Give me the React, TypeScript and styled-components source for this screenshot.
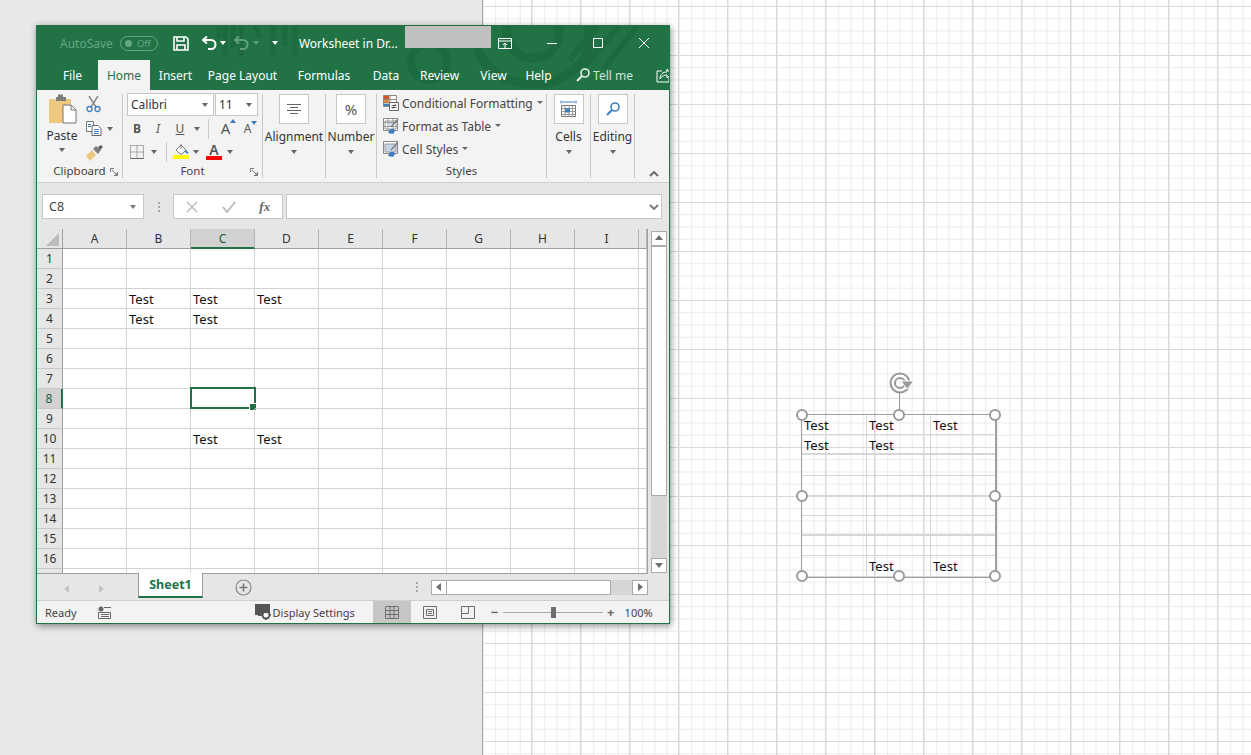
import * as React from "react"
import styled, { createGlobalStyle } from "styled-components"

const GREEN = "#217346"
const UI_FONT = `"Noto Sans", "Open Sans", Arial, sans-serif`

const GlobalStyle = createGlobalStyle`
    html, body {
        margin: 0;
        padding: 0;
        width: 1251px;
        height: 755px;
        overflow: hidden;
        font-family: ${UI_FONT};
        font-size: 12px;
        color: #333;
    }
    * { box-sizing: border-box; }
`

const Page = styled.div`
    position: relative;
    display: flex;
    width: 1251px;
    height: 755px;
`

const LeftPane = styled.div`
    width: 483px;
    background: #e8e8e8;
    border-right: 1px solid #a6a6b0;
`

const Canvas = styled.div`
    flex: 1;
    background-color: #fff;
    background-image:
        linear-gradient(to right, #d9d9d9 1px, transparent 1px),
        linear-gradient(to bottom, #d9d9d9 1px, transparent 1px),
        linear-gradient(to right, #ebebeb 1px, transparent 1px),
        linear-gradient(to bottom, #ebebeb 1px, transparent 1px);
    background-size: 49px 49px, 49px 49px, 12.25px 12.25px, 12.25px 12.25px;
    background-position: 48px 6px, 48px 6px, 0 6px, 0 6px;
`

const ExcelWindow = styled.div`
    position: absolute;
    left: 36px;
    top: 25px;
    width: 634px;
    height: 599px;
    display: flex;
    flex-direction: column;
    background: #e6e6e6;
    border: 1px solid ${GREEN};
    box-shadow: 1px 2px 7px rgba(0, 0, 0, 0.45);
`

const Header = styled.header`
    position: relative;
    height: 64px;
    flex: none;
    background: ${GREEN};
    color: #fff;
    overflow: hidden;
`

const HeaderPattern = styled.svg`
    position: absolute;
    left: 0;
    top: 0;
`

const TitleBar = styled.div`
    position: relative;
    display: flex;
    align-items: center;
    height: 34px;
    padding-left: 23px;
`

const Dim = styled.span`
    color: #66a584;
`

const Toggle = styled.div`
    display: flex;
    align-items: center;
    gap: 5px;
    width: 38px;
    height: 15px;
    margin-left: 7px;
    padding-left: 4px;
    border: 1px solid #66a584;
    border-radius: 8px;
    font-size: 9.5px;
    color: #66a584;
    &::before {
        content: "";
        width: 7px;
        height: 7px;
        border-radius: 50%;
        background: #66a584;
    }
`

const Slot = styled.div<{ $w: number; $ml?: number }>`
    display: flex;
    align-items: center;
    justify-content: center;
    flex: none;
    width: ${p => p.$w}px;
    margin-left: ${p => p.$ml || 0}px;
`

const DocTitle = styled.div`
    width: 106px;
    margin-left: 20px;
    white-space: nowrap;
`

const Redacted = styled.div`
    width: 86px;
    height: 22px;
    margin-top: -13px;
    background: #c0c0c0;
`

const TabBar = styled.nav`
    position: relative;
    display: flex;
    align-items: flex-end;
    height: 30px;
    padding-left: 10px;
`

const Tab = styled.div<{ $active?: boolean; $w: number }>`
    display: flex;
    align-items: center;
    justify-content: center;
    flex: none;
    width: ${p => p.$w}px;
    height: 30px;
    background: ${p => (p.$active ? "#f3f3f3" : "transparent")};
    color: ${p => (p.$active ? GREEN : "#fff")};
    white-space: nowrap;
`

const Ribbon = styled.section`
    display: flex;
    flex: none;
    height: 93px;
    padding-top: 4px;
    background: #f3f3f3;
    border-bottom: 1px solid #d0d0d0;
`

const Group = styled.div<{ $w: number }>`
    display: flex;
    flex-direction: column;
    flex: none;
    width: ${p => p.$w}px;
    height: 84px;
    border-right: 1px solid #c9c9c9;
`

const GroupBody = styled.div`
    flex: 1;
    display: flex;
    min-height: 0;
`

const GroupLabel = styled.div`
    position: relative;
    height: 15px;
    line-height: 15px;
    font-size: 11.5px;
    text-align: center;
    color: #444;
    svg {
        position: absolute;
        right: 4px;
        top: 5px;
    }
`

const Arrow = styled.span<{ $c?: string }>`
    display: inline-block;
    flex: none;
    width: 0;
    height: 0;
    border-left: 3.5px solid transparent;
    border-right: 3.5px solid transparent;
    border-top: 4px solid ${p => p.$c || "#666"};
`

const PasteColumn = styled.div`
    display: flex;
    flex-direction: column;
    align-items: center;
    width: 42px;
    margin-left: 4px;
    color: #333;
`

const StackLabel = styled.div`
    margin-top: 3px;
    line-height: 16px;
    white-space: nowrap;
    font-size: 12px;
`

const ClipTools = styled.div`
    display: flex;
    flex-direction: column;
    gap: 7px;
    margin-left: 3px;
    padding-top: 2px;
`

const ClipTool = styled.div`
    display: flex;
    align-items: center;
    gap: 5px;
    height: 17px;
`

const FontBody = styled.div`
    display: flex;
    flex-direction: column;
    padding-left: 4px;
    margin-top: -1px;
`

const FontSelects = styled.div`
    display: flex;
    gap: 1px;
    margin-bottom: 1px;
`

const Select = styled.div<{ $w: number }>`
    display: flex;
    align-items: center;
    justify-content: space-between;
    width: ${p => p.$w}px;
    height: 23px;
    padding: 0 5px 0 3px;
    background: #fff;
    border: 1px solid #c6c6c6;
`

const FontRow = styled.div`
    display: flex;
    align-items: center;
    height: 24px;
`

const FontButton = styled.div<{ $w: number; $bold?: boolean; $italic?: boolean; $under?: boolean }>`
    display: flex;
    align-items: center;
    justify-content: center;
    flex: none;
    width: ${p => p.$w}px;
    font-size: 12px;
    color: #555;
    font-weight: ${p => (p.$bold ? 700 : 400)};
    font-style: ${p => (p.$italic ? "italic" : "normal")};
    text-decoration: ${p => (p.$under ? "underline" : "none")};
`

const GrowA = styled.span<{ $size: number }>`
    position: relative;
    font-size: ${p => p.$size}px;
    line-height: 1;
    color: #555;
    svg {
        position: absolute;
        left: 100%;
        top: -2px;
    }
`

const RowSep = styled.div`
    flex: none;
    width: 1px;
    height: 20px;
    margin: 0 5px;
    background: #c9c9c9;
`

const ColorA = styled.div`
    display: flex;
    flex-direction: column;
    align-items: center;
    width: 16px;
    font-weight: 600;
    font-size: 14px;
    line-height: 13px;
    color: #555;
`

const ColorBar = styled.div<{ $c: string }>`
    width: 16px;
    height: 4px;
    background: ${p => p.$c};
`

const StackGroup = styled.div`
    flex: 1;
    display: flex;
    flex-direction: column;
    align-items: center;
`

const BoxButton = styled.div`
    display: flex;
    align-items: center;
    justify-content: center;
    width: 30px;
    height: 30px;
    background: #fff;
    border: 1px solid #c6c6c6;
    font-size: 15px;
    color: #555;
`

const StylesList = styled.div`
    display: flex;
    flex-direction: column;
    gap: 5px;
    padding-left: 6px;
`

const StyleItem = styled.div`
    display: flex;
    align-items: center;
    gap: 3px;
    height: 18px;
    white-space: nowrap;
    color: #444;
    ${Arrow} {
        margin-left: 1px;
        margin-top: -2px;
        border-left-width: 3px;
        border-right-width: 3px;
        border-top-width: 3px;
    }
`

const Collapse = styled.div`
    margin-left: auto;
    margin-right: 10px;
    align-self: flex-end;
    padding-bottom: 5px;
`

const FormulaBar = styled.div`
    display: flex;
    align-items: center;
    flex: none;
    height: 46px;
    padding-left: 5px;
    padding-top: 1px;
`

const NameBox = styled.div`
    display: flex;
    align-items: center;
    justify-content: space-between;
    width: 102px;
    height: 25px;
    padding: 0 7px 0 6px;
    background: #fff;
    border: 1px solid #c6c6c6;
    font-size: 12.5px;
    color: #444;
`

const Grip = styled.div`
    display: flex;
    flex-direction: column;
    gap: 2px;
    margin: 0 13px 0 14px;
    i {
        display: block;
        width: 2px;
        height: 2px;
        background: #a8a8a8;
    }
`

const FuncBox = styled.div`
    display: flex;
    align-items: center;
    justify-content: space-around;
    width: 110px;
    height: 25px;
    margin-right: 3px;
    background: #fff;
    border: 1px solid #c6c6c6;
`

const Fx = styled.span`
    font-family: "Liberation Serif", serif;
    font-style: italic;
    font-weight: 700;
    font-size: 13px;
    color: #666;
`

const FormulaInput = styled.div`
    display: flex;
    align-items: center;
    justify-content: flex-end;
    width: 376px;
    height: 25px;
    padding-right: 2px;
    background: #fff;
    border: 1px solid #c6c6c6;
`

const SheetArea = styled.div`
    display: flex;
    flex: none;
    height: 345px;
`

const Sheet = styled.div`
    display: grid;
    grid-template-columns: 26px repeat(9, 64px) 8px;
    grid-auto-rows: 20px;
    width: 611px;
    height: 345px;
    overflow: hidden;
    background: #fff;
    border-right: 1px solid #9e9e9e;
    border-bottom: 1px solid #9e9e9e;
    font-size: 13px;
`

const Corner = styled.div`
    position: relative;
    background: #e6e6e6;
    border-right: 1px solid #9e9e9e;
    border-bottom: 1px solid #9e9e9e;
    &::after {
        content: "";
        position: absolute;
        right: 3px;
        bottom: 2px;
        border-left: 13px solid transparent;
        border-bottom: 13px solid #bdbdbd;
    }
`

const ColHead = styled.div<{ $on?: boolean }>`
    display: flex;
    align-items: center;
    justify-content: center;
    background: ${p => (p.$on ? "#d2d2d2" : "#e6e6e6")};
    color: ${p => (p.$on ? "#1c5f3b" : "#333")};
    font-size: 12px;
    border-right: 1px solid #b4b4b4;
    border-bottom: ${p => (p.$on ? `2px solid ${GREEN}` : "1px solid #9e9e9e")};
`

const RowHead = styled.div<{ $on?: boolean }>`
    display: flex;
    align-items: center;
    justify-content: center;
    background: ${p => (p.$on ? "#d2d2d2" : "#e6e6e6")};
    color: ${p => (p.$on ? "#1c5f3b" : "#333")};
    font-size: 12px;
    border-right: ${p => (p.$on ? `2px solid ${GREEN}` : "1px solid #9e9e9e")};
    border-bottom: 1px solid #c8c8c8;
`

const Cell = styled.div<{ $selected?: boolean }>`
    position: relative;
    padding-left: 2px;
    line-height: 20px;
    color: #111;
    white-space: nowrap;
    border-right: 1px solid #d4d4d4;
    border-bottom: 1px solid #d4d4d4;
    ${p => p.$selected && `
        &::before {
            content: "";
            position: absolute;
            inset: -2px -2px -1px -1px;
            border: 2px solid ${GREEN};
        }
        &::after {
            content: "";
            position: absolute;
            right: -3px;
            bottom: -3px;
            width: 6px;
            height: 6px;
            background: ${GREEN};
            border: 1px solid #fff;
        }
    `}
`

const VScroll = styled.div`
    display: flex;
    flex-direction: column;
    width: 16px;
    margin: 2px 0 1px 3px;
`

const ScrollButton = styled.div<{ $w?: number }>`
    display: flex;
    align-items: center;
    justify-content: center;
    flex: none;
    width: ${p => p.$w || 16}px;
    height: 15px;
    background: #fff;
    border: 1px solid #ababab;
`

const VThumb = styled.div`
    flex: none;
    height: 250px;
    background: #fff;
    border: 1px solid #ababab;
`

const Track = styled.div`
    flex: 1;
    background: #d6d6d6;
`

const SheetTabs = styled.div`
    display: flex;
    align-items: center;
    flex: none;
    height: 27px;
    padding-left: 101px;
    border-bottom: 1px solid #d0d0d0;
    position: relative;
`

const TabArrows = styled.div`
    position: absolute;
    left: 25px;
    top: 10px;
    display: flex;
    gap: 24px;
`

const SheetTab = styled.div`
    display: flex;
    align-items: center;
    justify-content: center;
    width: 65px;
    height: 25px;
    margin-top: -3px;
    background: #fff;
    border: 1px solid #9e9e9e;
    border-top: none;
    border-bottom: 2px solid ${GREEN};
    font-weight: 700;
    font-size: 12.5px;
    color: ${GREEN};
`

const AddSheet = styled.div`
    margin-left: 32px;
    height: 17px;
`

const HScroll = styled.div`
    display: flex;
    align-items: center;
    height: 15px;
    width: 217px;
    margin-left: 13px;
`

const HThumb = styled.div`
    flex: none;
    width: 165px;
    height: 15px;
    margin-left: -1px;
    background: #fff;
    border: 1px solid #ababab;
`

const StatusBar = styled.footer`
    flex: 1;
    display: flex;
    align-items: center;
    padding-left: 8px;
    background: #f3f3f3;
    font-size: 11px;
    color: #444;
`

const ViewButton = styled.div<{ $on?: boolean }>`
    display: flex;
    align-items: center;
    justify-content: center;
    flex: none;
    align-self: stretch;
    width: 38px;
    background: ${p => (p.$on ? "#c6c6c6" : "transparent")};
`

const ZoomSlider = styled.div`
    position: relative;
    width: 100px;
    height: 1px;
    margin: 0 3px;
    background: #a6a6a6;
    &::after {
        content: "";
        position: absolute;
        left: 48px;
        top: -5px;
        width: 5px;
        height: 11px;
        background: #6e6e6e;
    }
`

const ZoomGlyph = styled.span`
    flex: none;
    width: 10px;
    font-size: 13px;
    font-weight: 700;
    line-height: 1;
    color: #666;
    text-align: center;
`

const DrawnObject = styled.div`
    position: absolute;
    left: 801px;
    top: 414px;
    width: 196px;
    height: 164px;
    border: 1px solid #9e9e9e;
    border-width: 1px 2px 2px 1px;
`

const ObjectTable = styled.div`
    display: grid;
    grid-template-columns: 65px 64px 1fr;
    grid-template-rows: repeat(8, 20.2px);
    height: 100%;
    font-size: 13px;
    color: #111;
`

const ObjectCell = styled.div<{ $thick?: boolean; $last?: boolean }>`
    padding-left: 2px;
    line-height: 20px;
    border-right: ${p => (p.$last ? "none" : "1px solid #d6d6d6")};
    border-bottom: ${p => (p.$thick ? "2px" : "1px")} solid #d6d6d6;
`

const Handle = styled.div<{ $x: number; $y: number }>`
    position: absolute;
    left: ${p => p.$x}%;
    top: ${p => p.$y}%;
    width: 12px;
    height: 12px;
    margin: -6px 0 0 -6px;
    background: #fff;
    border: 2px solid #9a9a9a;
    border-radius: 50%;
`

const RotateStem = styled.div`
    position: absolute;
    left: 97px;
    top: -22px;
    width: 1px;
    height: 17px;
    background: #9a9a9a;
`

const RotateIcon = styled.svg`
    position: absolute;
    left: 87px;
    top: -44px;
`

const Svg: React.FC<{ w: number; h: number; children: React.ReactNode }> = ({ w, h, children }) => (
    <svg width={w} height={h} viewBox={`0 0 ${w} ${h}`} fill="none" style={{ display: "block", flex: "none" }}>
        {children}
    </svg>
)

const SaveIcon = () => (
    <Svg w={16} h={15}>
        <path d="M1 1h12l2 2v11H1z" stroke="#fff" strokeWidth="1.6" />
        <path d="M4 1v4h7V1M4 14V9h8v5" stroke="#fff" strokeWidth="1.6" />
    </Svg>
)

const UndoIcon = ({ c = "#fff" }: { c?: string }) => (
    <Svg w={15} h={14}>
        <path d="M1 4h8a4 4 0 0 1 0 9H6" stroke={c} strokeWidth="2" />
        <path d="M5 0.5 1 4l4 3.5" stroke={c} strokeWidth="2" />
    </Svg>
)

const PasteIcon = () => (
    <Svg w={29} h={31}>
        <path d="M1 5h22v24H2a1 1 0 0 1-1-1z" fill="#edc87e" />
        <path d="M8 3h2V0.5h5V3h3v4H8z" fill="#7d7d7d" />
        <path d="M15 11h8l5 5v13H15z" fill="#fff" stroke="#777" />
        <path d="M23 11v5h5" stroke="#777" />
    </Svg>
)

const ScissorsIcon = () => (
    <Svg w={15} h={17}>
        <path d="M3 0l7 11M12 0L5 11" stroke="#8a8a8a" strokeWidth="1.5" />
        <circle cx="3.5" cy="13" r="2.5" stroke="#3f7fc1" strokeWidth="1.3" />
        <circle cx="11.5" cy="13" r="2.5" stroke="#3f7fc1" strokeWidth="1.3" />
    </Svg>
)

const CopyIcon = () => (
    <Svg w={16} h={15}>
        <path d="M.5.5h7v10h-7z" fill="#fff" stroke="#777" />
        <path d="M6 4.5h6l3 3v7H6z" fill="#fff" stroke="#666" />
        <path d="M8 8.5h5M8 10.5h5M8 12.5h5M2 3.5h3M2 5.5h3" stroke="#3f7fc1" />
    </Svg>
)

const BrushIcon = () => (
    <Svg w={17} h={16}>
        <path d="M0 11l6-6 4 5-6 6z" fill="#edc87e" />
        <path d="M7 4l3-3 5 4-3 4z" fill="#7d7d7d" />
        <path d="M12 2l3-2 2 2-3 3z" fill="#5e5e5e" />
    </Svg>
)

const UpTick = ({ c = "#3f7fc1", flip = false }: { c?: string; flip?: boolean }) => (
    <svg width="6" height="4" viewBox="0 0 6 4">
        <path d={flip ? "M0 0h6L3 4z" : "M3 0l3 4H0z"} fill={c} />
    </svg>
)

const BorderIcon = () => (
    <Svg w={14} h={14}>
        <path d="M.5.5h13v13H.5zM7 .5v13M.5 7h13" stroke="#666" strokeDasharray="1 1" />
        <path d="M.5 13.5h13" stroke="#666" />
    </Svg>
)

const FillIcon = () => (
    <Svg w={16} h={11}>
        <path d="M3 6l5-5 5 5-4 4H7z" fill="#fff" stroke="#777" />
        <path d="M8 0v5" stroke="#777" />
        <path d="M13 6l2.5 2.5-1 1.5-2.5-2z" fill="#3f7fc1" />
    </Svg>
)

const AlignIcon = () => (
    <Svg w={14} h={11}>
        <path d="M0 .5h14M3 3.5h8M0 6.5h14M3 9.5h8" stroke="#666" />
    </Svg>
)

const CondIcon = () => (
    <Svg w={16} h={16}>
        <path d="M.5.5h13v11H.5z" fill="#fff" stroke="#888" />
        <path d="M1 1h5v3H1z" fill="#d2552c" />
        <path d="M1 5h5v3H1z" fill="#e08a3c" />
        <path d="M1 9h5v2H1z" fill="#3f7fc1" />
        <path d="M7 .5v11M.5 4.5h13M.5 8h13" stroke="#888" />
        <path d="M6.5 7.5h9v8h-9z" fill="#fff" stroke="#666" />
        <path d="M8.5 10.5h5M8.5 12.5h5M12.5 9l-3 5" stroke="#444" strokeWidth=".8" />
    </Svg>
)

const TableIcon = ({ plain = false }: { plain?: boolean }) => (
    <Svg w={16} h={16}>
        <path d="M.5.5h14v12H.5z" fill="#fff" stroke="#888" />
        {!plain && <path d="M.5 4.5h14M.5 8.5h14M5 .5v12M10 .5v12" stroke="#999" />}
        <path d="M2 3h11v8H2z" fill={plain ? "#c7d6e8" : "none"} stroke="#999" />
        {!plain && <path d="M5 5h5v3H5z" fill="#c7d6e8" />}
        <path d="M15 1L8 9" stroke="#777" strokeWidth="1.2" />
        <path d="M7 11l4 0 1 2-2 3-5-1z" fill="#3f7fc1" />
    </Svg>
)

const CellsIcon = () => (
    <Svg w={17} h={18}>
        <path d="M1 .5v3M16 .5v3M2 2h13" stroke="#3f7fc1" />
        <path d="M1.5 5.5h14v11h-14z" fill="#fff" stroke="#777" />
        <path d="M1.5 8.5h14M1.5 11.5h14M1.5 14.5h14M5 5.5v11M9 5.5v11M12.5 5.5v11" stroke="#999" />
        <path d="M5 8.5h5v4H5z" fill="#3f7fc1" />
    </Svg>
)

const SearchIcon = ({ c = "#3f7fc1", s = 14 }: { c?: string; s?: number }) => (
    <svg width={s} height={s} viewBox="0 0 14 14" fill="none" style={{ display: "block" }}>
        <circle cx="9" cy="5" r="4" stroke={c} strokeWidth="1.6" />
        <path d="M6 8l-5 5" stroke={c} strokeWidth="2" />
    </svg>
)

const GroupCorner = () => (
    <svg width="8" height="8" viewBox="0 0 8 8" fill="none">
        <path d="M.5 4V.5H4M7.5 4v3.5H4M2 2l5 5M5 7h2V5" stroke="#777" />
    </svg>
)

const Chevron = ({ up = false, c = "#666" }: { up?: boolean; c?: string }) => (
    <svg width="10" height="6" viewBox="0 0 10 6" fill="none" style={{ display: "block" }}>
        <path d={up ? "M1 5l4-4 4 4" : "M1 1l4 4 4-4"} stroke={c} strokeWidth="1.8" />
    </svg>
)

const Tri = ({ dir, c = "#6e6e6e" }: { dir: "up" | "down" | "left" | "right"; c?: string }) => {
    const d = { up: "M5 1l4 5H1z", down: "M1 2h8L5 7z", left: "M7 1v8L2 5z", right: "M3 1v8l5-4z" }[dir]
    return (
        <svg width="10" height="10" viewBox="0 0 10 10" style={{ display: "block" }}>
            <path d={d} fill={c} />
        </svg>
    )
}

const COLS = ["A", "B", "C", "D", "E", "F", "G", "H", "I"]
const ROWS = Array.from({ length: 17 }, (_, i) => i + 1)

const SHEET: Record<number, string[]> = {
    3: ["B", "C", "D"],
    4: ["B", "C"],
    10: ["C", "D"],
}

const OBJECT_ROWS = [
    ["Test", "Test", "Test"],
    ["Test", "Test", ""],
    ["", "", ""],
    ["", "", ""],
    ["", "", ""],
    ["", "", ""],
    ["", "", ""],
    ["", "Test", "Test"],
]

const HANDLES = [
    [0, 0], [50, 0], [100, 0],
    [0, 50], [100, 50],
    [0, 100], [50, 100], [100, 100],
]

const TABS: [string, number][] = [
    ["File", 51],
    ["Home", 52],
    ["Insert", 51],
    ["Page Layout", 83],
    ["Formulas", 80],
    ["Data", 44],
    ["Review", 63],
    ["View", 45],
    ["Help", 45],
]

export default function App() {
    return (
        <>
            <GlobalStyle />
            <Page>
                <LeftPane />
                <Canvas />

                <ExcelWindow>
                    <Header>
                        <HeaderPattern width="632" height="64" viewBox="0 0 632 64" fill="none">
                            <g stroke="#1d6a3f" strokeWidth="5">
                                <path d="M182 0v12M188 0v30M196 0v22M204 0v30M218 0l6 12M236 0v30M248 0v20M258 0v30" />
                                <circle cx="392" cy="36" r="18" strokeWidth="8" />
                                <path d="M440 0v14a56 44 0 0 0 112 0V0" strokeWidth="9" />
                                <path d="M470 0v8a26 24 0 0 0 52 0V0" strokeWidth="9" />
                                <path d="M560 0l-28 34M582 0l-34 40M600 0l-34 44" strokeWidth="6" />
                            </g>
                        </HeaderPattern>
                        <TitleBar>
                            <Dim>AutoSave</Dim>
                            <Toggle>Off</Toggle>
                            <Slot $w={16} $ml={15}><SaveIcon /></Slot>
                            <Slot $w={15} $ml={13}><UndoIcon /></Slot>
                            <Slot $w={7} $ml={3}><Arrow $c="#fff" /></Slot>
                            <Slot $w={15} $ml={7}><UndoIcon c="#5f9f7f" /></Slot>
                            <Slot $w={7} $ml={4}><Arrow $c="#5f9f7f" /></Slot>
                            <Slot $w={7} $ml={12}><Arrow $c="#fff" /></Slot>
                            <DocTitle>Worksheet in Dr...</DocTitle>
                            <Redacted />
                            <Slot $w={14} $ml={7}>
                                <Svg w={14} h={11}>
                                    <path d="M.5.5h13v10H.5zM.5 3h13M7 10V5M5 7l2-2 2 2" stroke="#fff" />
                                </Svg>
                            </Slot>
                            <Slot $w={10} $ml={35}>
                                <Svg w={10} h={10}><path d="M0 5.5h10" stroke="#fff" /></Svg>
                            </Slot>
                            <Slot $w={10} $ml={36}>
                                <Svg w={10} h={10}><path d="M.5.5h9v9h-9z" stroke="#fff" /></Svg>
                            </Slot>
                            <Slot $w={10} $ml={36}>
                                <Svg w={10} h={10}><path d="M0 0l10 10M10 0L0 10" stroke="#fff" /></Svg>
                            </Slot>
                        </TitleBar>
                        <TabBar>
                            {TABS.map(([name, w]) => (
                                <Tab key={name} $w={w} $active={name === "Home"}>{name}</Tab>
                            ))}
                            <Slot $w={14} $ml={15} style={{ height: 30 }}><SearchIcon c="#e6f0ea" /></Slot>
                            <Tab $w={46} style={{ color: "#cfe3d8" }}>Tell me</Tab>
                            <Slot $w={16} $ml={20} style={{ height: 30 }}>
                                <Svg w={16} h={15}>
                                    <path d="M6 3H1v11h12V9" stroke="#fff" />
                                    <path d="M4 11c0-5 3-7 7-7V1l4 5-4 4V7c-3 0-5 1-7 4z" stroke="#fff" />
                                </Svg>
                            </Slot>
                        </TabBar>
                    </Header>

                    <Ribbon>
                        <Group $w={86}>
                            <GroupBody>
                                <PasteColumn>
                                    <PasteIcon />
                                    <StackLabel>Paste</StackLabel>
                                    <Arrow style={{ marginTop: 4 }} />
                                </PasteColumn>
                                <ClipTools>
                                    <ClipTool><ScissorsIcon /></ClipTool>
                                    <ClipTool><CopyIcon /><Arrow /></ClipTool>
                                    <ClipTool><BrushIcon /></ClipTool>
                                </ClipTools>
                            </GroupBody>
                            <GroupLabel>Clipboard<GroupCorner /></GroupLabel>
                        </Group>

                        <Group $w={140}>
                            <GroupBody>
                                <FontBody>
                                    <FontSelects>
                                        <Select $w={87}>Calibri<Arrow /></Select>
                                        <Select $w={43}>11<Arrow /></Select>
                                    </FontSelects>
                                    <FontRow>
                                        <FontButton $w={20} $bold>B</FontButton>
                                        <FontButton $w={22} $italic>I</FontButton>
                                        <FontButton $w={22} $under>U</FontButton>
                                        <FontButton $w={12}><Arrow /></FontButton>
                                        <RowSep />
                                        <FontButton $w={23}>
                                            <GrowA $size={15}>A<UpTick /></GrowA>
                                        </FontButton>
                                        <FontButton $w={21}>
                                            <GrowA $size={12}>A<UpTick flip /></GrowA>
                                        </FontButton>
                                    </FontRow>
                                    <FontRow>
                                        <FontButton $w={20}><BorderIcon /></FontButton>
                                        <FontButton $w={14}><Arrow /></FontButton>
                                        <RowSep />
                                        <FontButton $w={17}>
                                            <ColorA><FillIcon /><ColorBar $c="#ffff00" /></ColorA>
                                        </FontButton>
                                        <FontButton $w={14}><Arrow /></FontButton>
                                        <FontButton $w={22}>
                                            <ColorA>A<ColorBar $c="#ff0000" /></ColorA>
                                        </FontButton>
                                        <FontButton $w={10}><Arrow /></FontButton>
                                    </FontRow>
                                </FontBody>
                            </GroupBody>
                            <GroupLabel>Font<GroupCorner /></GroupLabel>
                        </Group>

                        <Group $w={63}>
                            <StackGroup>
                                <BoxButton><AlignIcon /></BoxButton>
                                <StackLabel style={{ marginTop: 5 }}>Alignment</StackLabel>
                                <Arrow style={{ marginTop: 5 }} />
                            </StackGroup>
                        </Group>

                        <Group $w={51}>
                            <StackGroup>
                                <BoxButton>%</BoxButton>
                                <StackLabel style={{ marginTop: 5 }}>Number</StackLabel>
                                <Arrow style={{ marginTop: 5 }} />
                            </StackGroup>
                        </Group>

                        <Group $w={170}>
                            <GroupBody>
                                <StylesList>
                                    <StyleItem><CondIcon />Conditional Formatting<Arrow /></StyleItem>
                                    <StyleItem><TableIcon />Format as Table<Arrow /></StyleItem>
                                    <StyleItem><TableIcon plain />Cell Styles<Arrow /></StyleItem>
                                </StylesList>
                            </GroupBody>
                            <GroupLabel>Styles</GroupLabel>
                        </Group>

                        <Group $w={44}>
                            <StackGroup>
                                <BoxButton><CellsIcon /></BoxButton>
                                <StackLabel style={{ marginTop: 5 }}>Cells</StackLabel>
                                <Arrow style={{ marginTop: 5 }} />
                            </StackGroup>
                        </Group>

                        <Group $w={44}>
                            <StackGroup>
                                <BoxButton><SearchIcon /></BoxButton>
                                <StackLabel style={{ marginTop: 5 }}>Editing</StackLabel>
                                <Arrow style={{ marginTop: 5 }} />
                            </StackGroup>
                        </Group>

                        <Collapse><Chevron up /></Collapse>
                    </Ribbon>

                    <FormulaBar>
                        <NameBox>C8<Arrow $c="#777" /></NameBox>
                        <Grip><i /><i /><i /></Grip>
                        <FuncBox>
                            <Svg w={12} h={12}><path d="M1 1l10 10M11 1L1 11" stroke="#bdbdbd" strokeWidth="1.5" /></Svg>
                            <Svg w={14} h={12}><path d="M1 6l4 5 8-10" stroke="#bdbdbd" strokeWidth="2" /></Svg>
                            <Fx>fx</Fx>
                        </FuncBox>
                        <FormulaInput><Chevron c="#777" /></FormulaInput>
                    </FormulaBar>

                    <SheetArea>
                        <Sheet>
                            <Corner />
                            {COLS.map(c => (
                                <ColHead key={c} $on={c === "C"}>{c}</ColHead>
                            ))}
                            <ColHead />
                            {ROWS.map(r => (
                                <React.Fragment key={r}>
                                    <RowHead $on={r === 8}>{r}</RowHead>
                                    {COLS.map(c => (
                                        <Cell key={c} $selected={r === 8 && c === "C"}>
                                            {SHEET[r]?.includes(c) ? "Test" : ""}
                                        </Cell>
                                    ))}
                                    <Cell />
                                </React.Fragment>
                            ))}
                        </Sheet>
                        <VScroll>
                            <ScrollButton><Tri dir="up" /></ScrollButton>
                            <VThumb />
                            <Track />
                            <ScrollButton><Tri dir="down" /></ScrollButton>
                        </VScroll>
                    </SheetArea>

                    <SheetTabs>
                        <TabArrows>
                            <Tri dir="left" c="#c4c4c4" />
                            <Tri dir="right" c="#c4c4c4" />
                        </TabArrows>
                        <SheetTab>Sheet1</SheetTab>
                        <AddSheet>
                            <Svg w=
                                {17} h={17}>
                                <circle cx="8.5" cy="8.5" r="7.5" stroke="#888" strokeWidth="1.2" />
                                <path d="M8.5 4.5v8M4.5 8.5h8" stroke="#777" strokeWidth="1.6" />
                            </Svg>
                        </AddSheet>
                        <Grip style={{ margin: "0 0 0 164px" }}><i /><i /><i /></Grip>
                        <HScroll>
                            <ScrollButton><Tri dir="left" /></ScrollButton>
                            <HThumb />
                            <Track style={{ height: 15 }} />
                            <ScrollButton><Tri dir="right" /></ScrollButton>
                        </HScroll>
                    </SheetTabs>

                    <StatusBar>
                        <span>Ready</span>
                        <Slot $w={13} $ml={21}>
                            <Svg w={13} h={13}>
                                <circle cx="3" cy="3" r="2.5" fill="#666" />
                                <path d="M6 1.5h7M.5 6.5h12v6H.5zM3 8.5h8M3 10.5h8" stroke="#666" />
                            </Svg>
                        </Slot>
                        <Slot $w={16} $ml={144}>
                            <Svg w={16} h={16}>
                                <path d="M0 0h15v9H7l-1 3H3v-1H0z" fill="#555" />
                                <circle cx="11" cy="11" r="3.5" stroke="#555" strokeWidth="2" />
                                <path d="M11 6v1M11 15v1M6 11h1M15 11h1" stroke="#555" strokeWidth="1.5" />
                            </Svg>
                        </Slot>
                        <span style={{ marginLeft: 2, whiteSpace: "nowrap", width: 100 }}>Display Settings</span>
                        <ViewButton $on>
                            <Svg w={14} h={13}>
                                <path d="M.5.5h13v12H.5zM.5 4.5h13M.5 8.5h13M5 .5v12M9 .5v12" stroke="#6e6e6e" />
                            </Svg>
                        </ViewButton>
                        <ViewButton>
                            <Svg w={14} h={13}>
                                <path d="M.5.5h13v12H.5zM3.5 3.5h7v6h-7zM5 5.5h4M5 7.5h4" stroke="#6e6e6e" />
                            </Svg>
                        </ViewButton>
                        <ViewButton>
                            <Svg w={14} h={13}>
                                <path d="M.5.5h13v12H.5zM.5 7.5h7M7.5.5v7" stroke="#6e6e6e" />
                            </Svg>
                        </ViewButton>
                        <ZoomGlyph style={{ marginLeft: 3 }}>−</ZoomGlyph>
                        <ZoomSlider />
                        <ZoomGlyph>+</ZoomGlyph>
                        <span style={{ marginLeft: 9 }}>100%</span>
                    </StatusBar>
                </ExcelWindow>

                <DrawnObject>
                    <ObjectTable>
                        {OBJECT_ROWS.map((row, r) =>
                            row.map((text, c) => (
                                <ObjectCell key={`${r}-${c}`} $thick={r === 1 || r === 5} $last={c === 2}>
                                    {text}
                                </ObjectCell>
                            ))
                        )}
                    </ObjectTable>
                    <RotateStem />
                    <RotateIcon width="27" height="24" viewBox="0 0 27 24" fill="none">
                        <circle cx="11" cy="12" r="9.5" stroke="#9a9a9a" strokeWidth="2" />
                        <circle cx="11" cy="12" r="5" stroke="#9a9a9a" strokeWidth="2" />
                        <path d="M12 10h13l-7 8z" fill="#9a9a9a" stroke="#fff" />
                    </RotateIcon>
                    {HANDLES.map(([x, y]) => (
                        <Handle key={`${x}-${y}`} $x={x} $y={y} />
                    ))}
                </DrawnObject>
            </Page>
        </>
    )
}
